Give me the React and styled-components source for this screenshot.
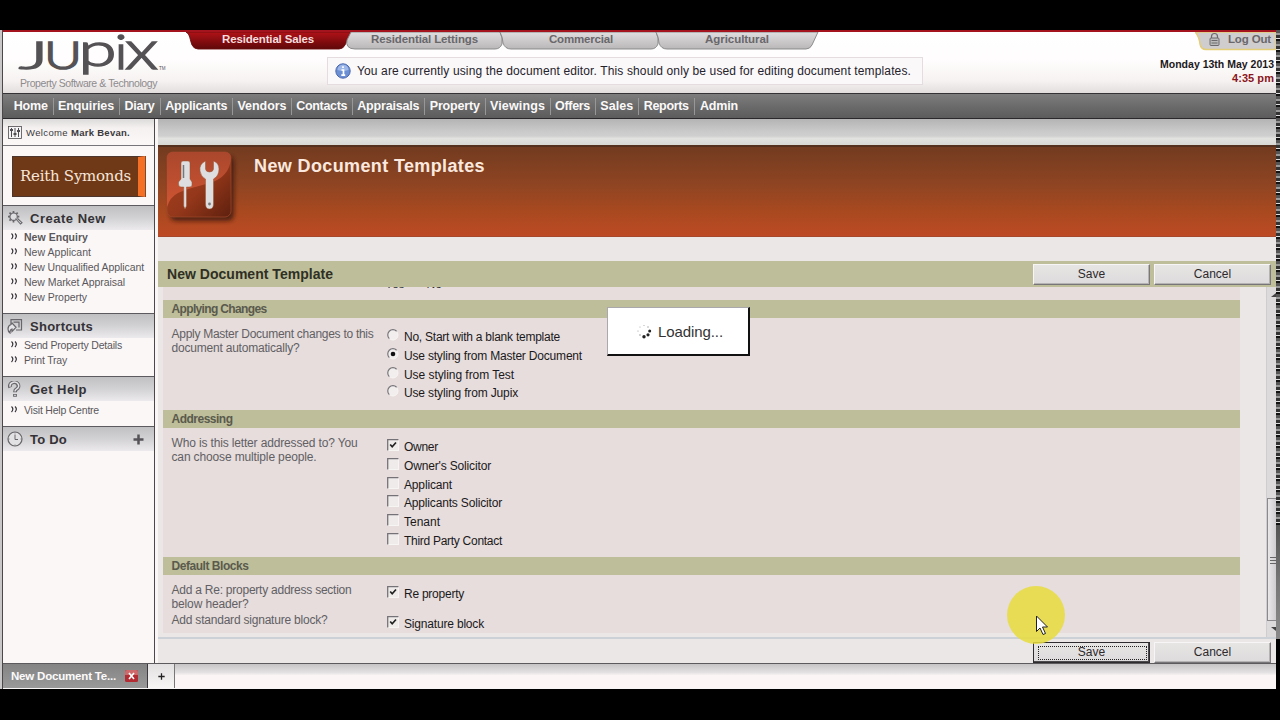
import React, { useLayoutEffect, useRef, useState } from "react";
import styled, { createGlobalStyle } from "styled-components";

const Global = createGlobalStyle`
  * { box-sizing: border-box; }
  html, body { margin: 0; background: #000; }
  body { width: 1280px; height: 720px; overflow: hidden; font-family: "Liberation Sans", Arial, sans-serif; font-size: 12px; color: #222; }
  button { font: inherit; color: inherit; margin: 0; }
`;

/* Text tracked so that it spans a given width. */
const FitSpan = styled.span`
  display: inline-block;
  white-space: nowrap;
`;
function Fit({ w, children }) {
  const ref = useRef(null);
  const [spacing, setSpacing] = useState(0);
  useLayoutEffect(() => {
    const natural = ref.current.getBoundingClientRect().width;
    setSpacing((w - natural) / String(children).length);
  }, [w, children]);
  return <FitSpan ref={ref} style={{ letterSpacing: spacing }}>{children}</FitSpan>;
}

const Screen = styled.div`
  width: 1280px;
  height: 720px;
  padding: 30px 0 31px;
  display: flex;
  background: #000;
`;
const LeftEdge = styled.div`
  width: 3px;
  background: #c9c7c7;
  border-right: 1px solid #4a4848;
`;
const Window = styled.div`
  width: 1273px;
  height: 659px;
  display: flex;
  flex-direction: column;
  position: relative;
  background: #fbf6f6;
`;
const RightEdge = styled.div`
  width: 4px;
  height: 609px;
  display: flex;
  flex-direction: column;
`;
const Stripes = styled.div`
  height: 497px;
  background: repeating-linear-gradient(#555 0 3px, #999 3px 5px, #333 5px 8px, #ddd 8px 9px, #111 9px 11px);
`;
const EdgeFade = styled.div`
  flex: 1;
  background: linear-gradient(#555, #777 50%, #8a8a8a);
`;

/* Header */
const Header = styled.header`
  height: 63px;
  flex: none;
  display: flex;
  border-top: 2px solid #a3141e;
  background: linear-gradient(#fff 0, #fffdfd 45%, #f7f2f2 80%, #e3dede 100%);
`;
const LogoBox = styled.div`
  width: 184px;
  padding-left: 13px;
`;
const Tagline = styled.div`
  margin: -3px 0 0 4px;
  font-size: 10.5px;
  line-height: 13px;
  color: #8d8b8d;
`;
const Middle = styled.div`
  flex: 1;
`;
const TabStrip = styled.div`
  display: flex;
  height: 17px;
`;
const AreaTab = styled.div`
  position: relative;
  width: ${(p) => p.$w}px;
  height: 17px;
  padding-left: ${(p) => p.$pad}px;
  font-size: 11.5px;
  font-weight: bold;
  line-height: 15px;
  color: ${(p) => (p.$on ? "#f4dede" : "#69676a")};
  svg { position: absolute; left: 0; top: 0; overflow: visible; }
  span { position: relative; }
`;
const Notice = styled.div`
  width: 596px;
  height: 28px;
  margin: 8px 0 0 140px;
  padding-left: 7px;
  display: flex;
  align-items: center;
  gap: 6px;
  border: 1px solid #e4dcdf;
  background: #fbf8fa;
  font-size: 12px;
  color: #25222a;
`;
const HeaderRight = styled.div`
  width: 120px;
  padding-right: 2px;
  display: flex;
  flex-direction: column;
  align-items: flex-end;
`;
const LogOut = styled.div`
  position: relative;
  width: 81px;
  height: 18px;
  margin-right: -2px;
  padding-left: 14px;
  display: flex;
  gap: 8px;
  font-size: 11.5px;
  font-weight: bold;
  line-height: 15px;
  color: #69676a;
  > svg { position: relative; }
  > svg:first-child { position: absolute; left: 0; top: 0; }
  > span { position: relative; }
`;
const DateText = styled.div`
  margin-top: 8px;
  font-size: 10.5px;
  font-weight: bold;
  line-height: 13px;
  color: #1b181b;
`;
const TimeText = styled.div`
  font-size: 11px;
  font-weight: bold;
  line-height: 15px;
  color: #8b1420;
`;

/* Navigation */
const Nav = styled.nav`
  height: 26px;
  flex: none;
  display: flex;
  align-items: center;
  padding-left: 6px;
  border-top: 1px solid #353335;
  border-bottom: 1px solid #2b292b;
  background: linear-gradient(#7d7d7d, #6b6b6b 50%, #5c5c5c);
`;
const NavItem = styled.a`
  width: ${(p) => p.$w}px;
  height: 17px;
  text-align: center;
  border-right: ${(p) => (p.$last ? "none" : "1px solid #979797")};
  font-size: 12.5px;
  line-height: 17px;
  font-weight: bold;
  color: #fbf9f9;
`;

/* Body */
const Body = styled.div`
  height: 544px;
  flex: none;
  display: flex;
`;
const Sidebar = styled.aside`
  width: 152px;
  border-right: 1px solid #4a484a;
  background: #fcf7f7;
`;
const Welcome = styled.div`
  height: 27px;
  padding: 0 0 0 5px;
  display: flex;
  align-items: center;
  gap: 4px;
  border-bottom: 1px solid #77757a;
  background: linear-gradient(#dcdada, #f5f1f1 35%, #fcf8f8);
  font-size: 9.5px;
  color: #3b393b;
`;
const UserName = styled.b`
  margin-left: -1px;
`;
const Brand = styled.div`
  width: 133px;
  height: 41px;
  margin: 10px 0 8px 9px;
  display: flex;
  align-items: center;
  padding: 0 0 1px 7px;
  border: 1px solid #4c352c;
  border-right: 7px solid #f56f25;
  background: #6f3917;
  box-shadow: 1px 0 0 #7c4a30;
  font-family: "DejaVu Serif", "Liberation Serif", serif;
  font-size: 15px;
  color: #f6e5d8;
`;
const Panel = styled.section`
  height: ${(p) => p.$h}px;
  border-top: 1px solid #5c5a5e;
`;
const PanelHead = styled.div`
  height: 24px;
  padding: 0 10px 0 4px;
  display: flex;
  align-items: center;
  background: linear-gradient(#c0bfc2, #d2d1d3 50%, #eceaec);
  font-size: 13px;
  font-weight: bold;
  color: #343236;
  svg { flex: none; }
  > span { margin-left: 7px; }
  > svg:last-child:not(:first-child) { margin-left: auto; }
`;
const Links = styled.div`
  margin-top: ${(p) => p.$mt}px;
`;
const Link = styled.a`
  height: 15px;
  display: flex;
  align-items: center;
  padding-left: 8px;
  gap: 6px;
  font-size: 10.5px;
  font-weight: ${(p) => (p.$b ? "bold" : "normal")};
  color: #59575b;
`;
const Main = styled.main`
  width: 1118px;
  margin-left: 3px;
  display: flex;
  flex-direction: column;
  background: #ebe7e7;
`;
const SubBar = styled.div`
  height: 26px;
  flex: none;
  background: linear-gradient(#b4b4b4, #cbcbcb 50%, #cfcfcf 65%, #e2e2e0 75%, #d8d8d5);
`;
const Banner = styled.div`
  height: 92px;
  flex: none;
  display: flex;
  padding: 6px 0 0 8px;
  border-top: 2px solid #56301f;
  border-bottom: 1px solid #a5482c;
  background: linear-gradient(#733b20, #8d4422 40%, #a84920 72%, #bd4a24);
`;
const BannerTitle = styled.h1`
  margin: 3px 0 0 12px;
  font-size: 18px;
  line-height: 20px;
  color: #fbe9df;
`;
const TitleBar = styled.div`
  height: 26px;
  flex: none;
  margin-top: 24px;
  padding: 0 5px 0 9px;
  display: flex;
  align-items: center;
  background: #bebe9a;
  color: #2f2f24;
`;
const Title = styled.h2`
  flex: 1;
  margin: 0;
  font-size: 14px;
  line-height: 20px;
`;
const Actions = styled.div`
  display: flex;
  gap: 4px;
  margin-left: auto;
`;
const Btn = styled.button`
  width: 117px;
  height: 21px;
  padding: 0;
  position: relative;
  line-height: 17px;
  font-size: 12px;
  text-align: center;
  color: #2c2a2c;
  background: linear-gradient(#e7e4e4, #dedbdc);
  border: 1px solid;
  border-color: #f7f5f5 #7a787a #777577 #f7f5f5;
  box-shadow: ${(p) => (p.$focus ? "inset -1px -1px 0 #4b494b" : "inset -1px -1px 0 #b5b3b4")};
  ${(p) => p.$focus && `
    border-color: #2e2c2e;
    &::after { content: ""; position: absolute; left: 4px; top: 3px; right: 2px; bottom: 2px; border: 1px dotted #222; }
  `}
`;
const Scroller = styled.div`
  height: 350px;
  flex: none;
  display: flex;
  overflow: hidden;
`;
const Form = styled.div`
  width: 1077px;
  margin: 0 26px 0 5px;
  height: 346px;
  background: #e6dddc;
`;
const ClippedRow = styled.div`
  height: 13px;
  padding-left: 222px;
  display: flex;
  gap: 22px;
  overflow: hidden;
  line-height: 14px;
  color: #333;
  span { margin-top: -10px; }
`;
const GroupHead = styled.h3`
  height: 18px;
  margin: 0;
  padding-left: 8.5px;
  background: #bebe9a;
  font-size: 12px;
  line-height: 18px;
  color: #5a5a4d;
`;
const GroupBody = styled.div`
  height: ${(p) => p.$h}px;
  padding-top: ${(p) => p.$pt}px;
`;
const Field = styled.div`
  display: grid;
  grid-template-columns: 224px 1fr;
  height: ${(p) => p.$h || "auto"};
`;
const Label = styled.div`
  display: flex;
  flex-direction: column;
  align-items: flex-start;
  padding-left: 8.5px;
  font-size: 12px;
  line-height: 14px;
  color: #626064;
`;
const Options = styled.div`
  padding-top: ${(p) => p.$pt}px;
`;
const Option = styled.label`
  height: 18.75px;
  display: flex;
  gap: 5px;
  font-size: 12px;
  line-height: 18px;
  color: #1b191b;
  svg { flex: none; margin-top: 1.2px; }
`;
const ScrollBar = styled.div`
  width: 10px;
  display: flex;
  flex-direction: column;
  align-items: stretch;
  background: #dcdadb;
  border-left: 1px solid #cfcdce;
`;
const Arrow = styled.div`
  height: 16px;
  display: flex;
  align-items: center;
  justify-content: flex-end;
`;
const Thumb = styled.div`
  height: 123px;
  margin-top: 195px;
  display: flex;
  align-items: center;
  justify-content: flex-end;
  border: 1px solid #8b898c;
  border-right: none;
  background: linear-gradient(90deg, #e9e7e8, #cfcdd0);
`;
const Foot = styled.div`
  flex: 1;
  display: flex;
  padding: 3px 5px 0 0;
  border-top: 2px solid #ccd1d7;
`;

/* Bottom tabs */
const BottomTabs = styled.footer`
  flex: 1;
  display: flex;
  border-top: 1px solid #5c5a5c;
  border-bottom: 1px solid #f7f5f5;
  background: linear-gradient(#c6c4c5, #e3e1e2 35%, #fbf5f5 48%);
`;
const DocTab = styled.div`
  width: 145px;
  padding: 0 9px 0 8px;
  display: flex;
  align-items: center;
  justify-content: space-between;
  border-right: 1px solid #3c3a3c;
  background: linear-gradient(#858485, #9a999a);
  color: #fbfafa;
  font-size: 11.5px;
  font-weight: bold;
`;
const AddTab = styled.div`
  width: 27px;
  display: flex;
  align-items: center;
  justify-content: center;
  background: linear-gradient(#e2e0e0, #f8f5f5);
  border-right: 1px solid #777;
`;

/* Overlays */
const Loading = styled.div`
  position: absolute;
  left: 604px;
  top: 277px;
  width: 143px;
  height: 49px;
  padding-left: 29px;
  display: flex;
  align-items: center;
  gap: 6px;
  border: 1px solid #aaa8aa;
  border-right: 2px solid #111;
  border-bottom: 2px solid #111;
  background: #fff;
  font-size: 15px;
  color: #333;
`;
const Pointer = styled.div`
  position: absolute;
  left: 1003px;
  top: 555px;
  width: 60px;
  height: 60px;
`;

/* Tab outlines: the strip's ends are slanted, the joints between tabs are curved. */
const LEFT = {
  first: "M-1 0C3 2 3 8 5 13Q7 17 11 17",
  second: "M4 0L0 8Q-1 12 1 14.5Q3 17 8 17",
  inner: "M-3 0Q0 6 0 11Q2 17 8 17",
};
const RIGHT = {
  slant: (w) => `H${w - 8}Q${w - 4} 17 ${w - 2} 13L${w + 4} 0Z`,
  curve: (w) => `H${w - 8}Q${w - 3} 17 ${w - 1} 12Q${w} 6 ${w - 3} 0Z`,
  end: (w) => `H${w - 12}Q${w - 8} 17 ${w - 6} 13L${w} 0Z`,
};
function Area({ w, pad, tw, on, left, right, children }) {
  return (
    <AreaTab $w={w} $pad={pad} $on={on}>
      <svg width={w} height="18">
        <defs>
          <linearGradient id="tabOn" x2="0" y2="1"><stop stopColor="#b01217" /><stop offset="1" stopColor="#5f0809" /></linearGradient>
          <linearGradient id="tabOff" x2="0" y2="1"><stop stopColor="#e0dedf" /><stop offset="1" stopColor="#b9b7b8" /></linearGradient>
        </defs>
        <path d={LEFT[left] + RIGHT[right](w)} fill={on ? "url(#tabOn)" : "url(#tabOff)"} stroke={on ? "#6b0d0f" : "#858385"} strokeWidth=".9" />
        <path d={`M-3 -.5H${w + 4}`} stroke="#a3141e" />
      </svg>
      <Fit w={tw}>{children}</Fit>
    </AreaTab>
  );
}

const LogoSvg = styled.svg`
  display: block;
  overflow: visible;
`;
function Logo() {
  return (
    <LogoSvg width="150" height="48" viewBox="16 32 150 48">
      <g fill="#555255" stroke="#555255" strokeWidth="1.500" fontFamily="Lato, sans-serif" fontWeight="300">
        <text x="19" y="69" fontSize="37.500" textLength="29" lengthAdjust="spacingAndGlyphs">J</text>
        <text x="44" y="69" fontSize="37.500" textLength="38" lengthAdjust="spacingAndGlyphs">U</text>
        <text x="78.500" y="66" fontSize="46" textLength="38" lengthAdjust="spacingAndGlyphs">p</text>
        <text x="114.500" y="69.300" fontSize="46.500" textLength="13" lengthAdjust="spacingAndGlyphs">i</text>
        <text x="125" y="69.300" fontSize="53" textLength="33" lengthAdjust="spacingAndGlyphs">x</text>
      </g>
      <text x="159" y="69.500" fontSize="4.500" fill="#555255">TM</text>
    </LogoSvg>
  );
}

const Chevrons = () => (
  <svg width="7" height="7" viewBox="0 0 7 7" fill="none" stroke="#333136" strokeWidth="1.200">
    <path d="M.5 .5 Q3.200 3 .5 6M4 .5 Q6.700 3 4 6" />
  </svg>
);
const InfoIcon = () => (
  <svg width="16" height="16" viewBox="0 0 16 16">
    <circle cx="8" cy="8" r="7.200" fill="#6c8fd4" stroke="#4a68ad" />
    <path d="M2.500 7a5.500 5.500 0 0 1 11 0Q8 9 2.500 7" fill="#9db7e8" />
    <path d="M6.500 7H8.500V12M6.300 12.200H10.200M8 3.200V5" fill="none" stroke="#fff" strokeWidth="1.700" />
  </svg>
);
const LockIcon = () => (
  <svg width="11" height="15" viewBox="0 0 11 15" fill="none" stroke="#6c6a6c">
    <path d="M2.500 6V4.500a3 3 0 0 1 6 0V6" strokeWidth="1.200" />
    <rect x="1" y="6" width="9" height="7.500" rx="1" fill="#bbb" />
    <path d="M2.500 8.500H8.500M2.500 11H8.500" />
  </svg>
);
const SlidersIcon = () => (
  <svg width="14" height="13" viewBox="0 0 14 13" fill="none" stroke="#4e4c50">
    <rect x=".5" y=".5" width="13" height="12" fill="#f6f4f4" strokeWidth=".8" />
    <path d="M3.500 2V11M7 2V11M10.500 2V11" />
    <path d="M2 4H5M5.500 8H8.500M9 5H12" strokeWidth="2" />
  </svg>
);
const GearIcon = () => (
  <svg width="16" height="16" viewBox="0 0 16 16" fill="none" stroke="#68666b">
    <path d="M6.500 1V3M2.500 2.700 4 4.200M1 6.700H3M2.500 10.700 4 9.200M6.500 10.500V12.500M10.700 2.700 9.200 4.200M10.300 6.700H12.300" strokeWidth="1.700" />
    <circle cx="6.600" cy="6.700" r="3.700" fill="#dedde0" strokeWidth="1.200" />
    <path d="M8.500 8.500 13.500 14 15 12.700 10.500 8.500" fill="#dedde0" strokeWidth="1.100" />
  </svg>
);
const ShortcutIcon = () => (
  <svg width="16" height="16" viewBox="0 0 16 16" fill="none" stroke="#68666b" strokeWidth="1.200">
    <path d="M4 6V1.700H14.500V12H9" />
    <path d="M6.500 4.200H12V9.500" />
    <path d="M4 6.500Q1 7.500 1 11Q1 13.500 3 15Q2.800 11.500 5 11V13.500L9 9.300 5 5Z" fill="#e5e4e6" />
  </svg>
);
const HelpIcon = () => (
  <svg width="16" height="17" viewBox="0 0 16 17" fill="none" strokeLinejoin="round">
    <path d="M3.200 6.500A4.300 3.800 0 1 1 9.500 8.200Q8 9 8 11.300M8 13V15.800" stroke="#68666b" strokeWidth="3.800" />
    <path d="M3.200 5.700A4.300 3.800 0 1 1 9.500 8.200Q8 9 8 10.500M8 13.800V15" stroke="#e3e2e4" strokeWidth="1.500" />
  </svg>
);
const ClockIcon = () => (
  <svg width="16" height="16" viewBox="0 0 16 16" fill="none" stroke="#68666b">
    <circle cx="8" cy="8" r="7" fill="#e2e1e3" strokeWidth="1.200" />
    <path d="M8 3.500V8.500H11" /><path d="M8 1.500V2.500M8 13.500V14.500M1.500 8H2.500M13.500 8H14.500" strokeWidth=".8" />
  </svg>
);
const PlusIcon = ({ s = 11, c = "#555358", sw = 2.5 }) => (
  <svg width={s} height={s} viewBox="0 0 11 11" stroke={c} strokeWidth={sw}><path d="M5.500 .5V10.500M.5 5.500H10.500" /></svg>
);
const TileSvg = styled.svg`
  overflow: visible;
`;
const ToolsIcon = () => (
  <TileSvg width="76" height="76" viewBox="0 0 76 76">
    <defs>
      <linearGradient id="tile" x2="1" y2="1"><stop stopColor="#a94324" /><stop offset=".55" stopColor="#94371a" /><stop offset="1" stopColor="#5e200e" /></linearGradient>
      <linearGradient id="shine" x2="0" y2="1"><stop stopColor="#aa472c" /><stop offset="1" stopColor="#cf5533" /></linearGradient>
      <filter id="soft" x="-20%" y="-20%" width="150%" height="150%"><feGaussianBlur stdDeviation="2" /></filter>
    </defs>
    <rect x="4" y="3" width="64" height="65" rx="6" fill="#35140a" opacity=".75" filter="url(#soft)" />
    <rect x="1" y="-1" width="64" height="65" rx="6" fill="url(#tile)" stroke="#a24a2c" strokeWidth=".7" />
    <path d="M7 -1H59Q65 -1 65 6Q63 24 44 30Q20 36 12 40Q4 44 1 54V5Q1 -1 7 -1Z" fill="url(#shine)" />
    <g fill="#dedddf" stroke="#96522f" strokeWidth=".5">
      <path d="M15 10Q15 8 17 8H22Q24 8 24 10V26L26 29V32Q26 34 23 34H20.500V53L19 56 17.700 53V34H15Q12.500 34 12.500 31V29L15 26Z" />
      <path d="M39.500 8Q33 11 34 18Q35 24 39.500 26V51Q39.500 56 43.500 56T47.500 51V26Q53 23 53 16Q53 10 47.500 8V16Q47 19 43.500 19T39.500 16Z" />
    </g>
    <path d="M17.500 12V25" stroke="#777" strokeWidth="1.500" /><circle cx="43.500" cy="51" r="1.400" fill="#777" />
  </TileSvg>
);
const Radio = ({ on }) => (
  <svg width="12" height="12" viewBox="0 0 12 12">
    <circle cx="6" cy="6" r="5" fill="#f3eeee" stroke="#f8f5f5" />
    <path d="M2.300 9.600A5 5 0 0 1 9.600 2.200" fill="none" stroke="#777579" strokeWidth="1.200" />
    {on && <circle cx="6" cy="6" r="2.300" fill="#111" />}
  </svg>
);
const Check = ({ on }) => (
  <svg width="12" height="12" viewBox="0 0 12 12">
    <rect x=".5" y=".5" width="11" height="11" fill="#f0ebeb" stroke="#f7f4f4" />
    <path d="M.7 11.500V.7H11.500" fill="none" stroke="#747276" strokeWidth="1.300" />
    {on && <path d="M3.200 5.500 5.200 7.800 9 3.500" fill="none" stroke="#222" strokeWidth="1.700" />}
  </svg>
);
const Spinner = () => {
  const dots = [[7, 1.5, .5], [3, 3, .5], [1, 7, .6], [3, 11, .8], [7, 12.700, 1.700], [11, 10.800, 1.600], [12.700, 7, 1.500], [11, 3, .7]];
  return (
    <svg width="15" height="15" viewBox="0 0 15 15">
      {dots.map(([x, y, r]) => <circle key={`${x}-${y}`} cx={x} cy={y} r={r} fill={r > 1 ? "#222" : "#999"} />)}
    </svg>
  );
};

const NAV = [["Home", 44.5, 34], ["Enquiries", 66, 56], ["Diary", 41, 30], ["Applicants", 72.5, 62], ["Vendors", 59, 49], ["Contacts", 60.5, 51], ["Appraisals", 72.5, 62], ["Property", 60.5, 50], ["Viewings", 65, 55], ["Offers", 45, 35], ["Sales", 43.5, 33], ["Reports", 55.5, 45], ["Admin", 49, 38]];
const AREAS = [
  { name: "Residential Sales", w: 160, pad: 35, tw: 92, on: true, left: "first", right: "slant" },
  { name: "Residential Lettings", w: 156, pad: 24, tw: 107, left: "second", right: "curve" },
  { name: "Commercial", w: 156, pad: 46, tw: 64, left: "inner", right: "curve" },
  { name: "Agricultural", w: 159, pad: 46, tw: 64, left: "inner", right: "end" },
];
const PANELS = [
  { title: "Create New", w: 76, h: 108, mt: -1, Icon: GearIcon, links: [["New Enquiry", 64, true], ["New Applicant", 67], ["New Unqualified Applicant", 120], ["New Market Appraisal", 101], ["New Property", 63]] },
  { title: "Shortcuts", w: 63, h: 63, mt: -1, Icon: ShortcutIcon, links: [["Send Property Details", 98], ["Print Tray", 43]] },
  { title: "Get Help", w: 57, h: 50, mt: 1, Icon: HelpIcon, links: [["Visit Help Centre", 75]] },
  { title: "To Do", w: 37, h: 26, mt: 0, Icon: ClockIcon, links: [], plus: true },
];
const STYLES = [["No, Start with a blank template", 156], ["Use styling from Master Document", 178, true], ["Use styling from Test", 110], ["Use styling from Jupix", 114]];
const PEOPLE = [["Owner", 34, true], ["Owner's Solicitor", 87], ["Applicant", 48], ["Applicants Solicitor", 98], ["Tenant", 36], ["Third Party Contact", 98]];

const OptionList = ({ items, Mark, pt }) => (
  <Options $pt={pt}>
    {items.map(([t, w, on]) => <Option key={t}><Mark on={on} /><Fit w={w}>{t}</Fit></Option>)}
  </Options>
);

export default function App() {
  return (
    <Screen>
      <Global />
      <LeftEdge />
      <Window>
        <Header>
          <LogoBox>
            <Logo />
            <Tagline><Fit w={137}>Property Software &amp; Technology</Fit></Tagline>
          </LogoBox>
          <Middle>
            <TabStrip>
              {AREAS.map(({ name, ...tab }) => <Area key={name} {...tab}>{name}</Area>)}
            </TabStrip>
            <Notice><InfoIcon /><Fit w={554}>You are currently using the document editor. This should only be used for editing document templates.</Fit></Notice>
          </Middle>
          <HeaderRight>
            <LogOut>
              <svg width="81" height="19"><path d="M0 0Q4 4 5 12Q6 17.500 11 17.500H81V0Z" fill="#cfcdce" stroke="#e5ce78" strokeWidth="1.500" /></svg>
              <LockIcon /><Fit w={43}>Log Out</Fit>
            </LogOut>
            <DateText><Fit w={114}>Monday 13th May 2013</Fit></DateText>
            <TimeText><Fit w={42}>4:35 pm</Fit></TimeText>
          </HeaderRight>
        </Header>
        <Nav>
          {NAV.map(([t, w, tw], i) => <NavItem key={t} $w={w} $last={i === NAV.length - 1}><Fit w={tw}>{t}</Fit></NavItem>)}
        </Nav>
        <Body>
          <Sidebar>
            <Welcome><SlidersIcon /><Fit w={42}>Welcome</Fit><UserName><Fit w={59}>Mark Bevan.</Fit></UserName></Welcome>
            <Brand><Fit w={111}>Reith Symonds</Fit></Brand>
            {PANELS.map(({ title, w, h, mt, Icon, links, plus }) => (
              <Panel key={title} $h={h}>
                <PanelHead><Icon /><Fit w={w}>{title}</Fit>{plus && <PlusIcon />}</PanelHead>
                <Links $mt={mt}>
                  {links.map(([t, tw, b]) => <Link key={t} $b={b}><Chevrons /><Fit w={tw}>{t}</Fit></Link>)}
                </Links>
              </Panel>
            ))}
          </Sidebar>
          <Main>
            <SubBar />
            <Banner>
              <ToolsIcon />
              <BannerTitle><Fit w={231}>New Document Templates</Fit></BannerTitle>
            </Banner>
            <TitleBar>
              <Title><Fit w={166}>New Document Template</Fit></Title>
              <Actions><Btn>Save</Btn><Btn>Cancel</Btn></Actions>
            </TitleBar>
            <Scroller>
              <Form>
                <ClippedRow><span>Yes</span><span>No</span></ClippedRow>
                <GroupHead><Fit w={95}>Applying Changes</Fit></GroupHead>
                <GroupBody $h={92} $pt={9}>
                  <Field>
                    <Label><Fit w={202}>Apply Master Document changes to this</Fit><Fit w={128}>document automatically?</Fit></Label>
                    <OptionList items={STYLES} Mark={Radio} pt={1} />
                  </Field>
                </GroupBody>
                <GroupHead><Fit w={61}>Addressing</Fit></GroupHead>
                <GroupBody $h={129} $pt={8}>
                  <Field>
                    <Label><Fit w={186}>Who is this letter addressed to? You</Fit><Fit w={145}>can choose multiple people.</Fit></Label>
                    <OptionList items={PEOPLE} Mark={Check} pt={2} />
                  </Field>
                </GroupBody>
                <GroupHead><Fit w={77}>Default Blocks</Fit></GroupHead>
                <GroupBody $h={58} $pt={8}>
                  <Field $h="30px">
                    <Label><Fit w={180}>Add a Re: property address section</Fit><Fit w={77}>below header?</Fit></Label>
                    <OptionList items={[["Re property", 60, true]]} Mark={Check} pt={2} />
                  </Field>
                  <Field>
                    <Label><Fit w={156}>Add standard signature block?</Fit></Label>
                    <OptionList items={[["Signature block", 80, true]]} Mark={Check} pt={2} />
                  </Field>
                </GroupBody>
              </Form>
              <ScrollBar>
                <Arrow><svg width="5" height="4"><path d="M0 4 5 0V4Z" fill="#444" /></svg></Arrow>
                <Thumb><svg width="6" height="8" stroke="#666"><path d="M0 1.500H6M0 4.500H6M0 7.500H6" /></svg></Thumb>
                <Arrow><svg width="5" height="4"><path d="M0 0H5V4Z" fill="#444" /></svg></Arrow>
              </ScrollBar>
            </Scroller>
            <Foot><Actions><Btn $focus>Save</Btn><Btn>Cancel</Btn></Actions></Foot>
          </Main>
        </Body>
        <BottomTabs>
          <DocTab>
            <Fit w={105}>New Document Te...</Fit>
            <svg width="13" height="12" viewBox="0 0 13 12"><rect width="13" height="12" rx="1.500" fill="#b32c33" /><path d="M0 2Q0 0 2 0H11Q13 0 13 2V5H0Z" fill="#cf6a6c" /><path d="M4 3 9 9M9 3 4 9" stroke="#fff" strokeWidth="1.600" /></svg>
          </DocTab>
          <AddTab><PlusIcon s={7} c="#222" sw={2} /></AddTab>
        </BottomTabs>
        <Loading><Spinner /><Fit w={65}>Loading...</Fit></Loading>
        <Pointer>
          <svg width="60" height="60" viewBox="0 0 60 60">
            <circle cx="30" cy="30" r="29" fill="#e8dc3c" opacity=".85" />
            <path d="M30.500 31V46.500L34 43 37 49.500 39.500 48.500 36.500 42H41.500Z" fill="#fff" stroke="#222" />
          </svg>
        </Pointer>
      </Window>
      <RightEdge><Stripes /><EdgeFade /></RightEdge>
    </Screen>
  );
}
